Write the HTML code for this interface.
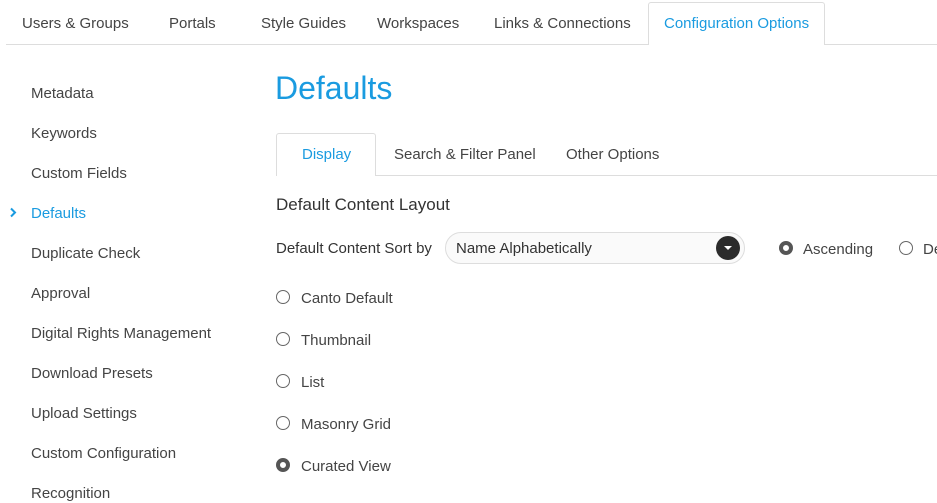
<!DOCTYPE html>
<html><head><style>
*{margin:0;padding:0;box-sizing:border-box}
body{width:937px;height:496px;overflow:hidden;background:#fff;font-family:"Liberation Sans",sans-serif;color:#444;font-size:15px;position:relative}
.a{position:absolute;white-space:nowrap;line-height:18px;margin-top:1px}
.blue{color:#1a9be0}
.r{position:absolute;width:14px;height:14px;border:1.5px solid #666;border-radius:50%;background:#fff}
.r.on{border:4px solid #555}
</style></head><body>
<div style="position:absolute;left:6px;top:44px;width:931px;height:1px;background:#ddd"></div>
<div style="position:absolute;left:648px;top:2px;width:177px;height:43px;border:1px solid #ddd;border-bottom:none;background:#fff;border-radius:3px 3px 0 0"></div>
<div class="a" style="left:22px;top:14px">Users &amp; Groups</div>
<div class="a" style="left:169px;top:14px">Portals</div>
<div class="a" style="left:261px;top:14px">Style Guides</div>
<div class="a" style="left:377px;top:14px">Workspaces</div>
<div class="a" style="left:494px;top:14px">Links &amp; Connections</div>
<div class="a blue" style="left:664px;top:14px">Configuration Options</div>

<div class="a" style="left:31px;top:84px">Metadata</div>
<div class="a" style="left:31px;top:124px">Keywords</div>
<div class="a" style="left:31px;top:164px">Custom Fields</div>
<svg style="position:absolute;left:9px;top:207px" width="8" height="11" viewBox="0 0 8 11"><path d="M2 1.5l4 4-4 4" fill="none" stroke="#1a9be0" stroke-width="2"/></svg>
<div class="a blue" style="left:31px;top:204px">Defaults</div>
<div class="a" style="left:31px;top:244px">Duplicate Check</div>
<div class="a" style="left:31px;top:284px">Approval</div>
<div class="a" style="left:31px;top:324px">Digital Rights Management</div>
<div class="a" style="left:31px;top:364px">Download Presets</div>
<div class="a" style="left:31px;top:404px">Upload Settings</div>
<div class="a" style="left:31px;top:444px">Custom Configuration</div>
<div class="a" style="left:31px;top:484px">Recognition</div>

<div class="a blue" style="left:275px;top:68px;font-size:32px;line-height:38px">Defaults</div>

<div style="position:absolute;left:276px;top:175px;width:661px;height:1px;background:#ddd"></div>
<div style="position:absolute;left:276px;top:133px;width:100px;height:43px;border:1px solid #ddd;border-bottom:none;background:#fff;border-radius:3px 3px 0 0"></div>
<div class="a blue" style="left:302px;top:145px">Display</div>
<div class="a" style="left:394px;top:145px">Search &amp; Filter Panel</div>
<div class="a" style="left:566px;top:145px">Other Options</div>

<div class="a" style="left:276px;top:194px;font-size:17px;line-height:20px;color:#333">Default Content Layout</div>
<div class="a" style="left:276px;top:239px;color:#333">Default Content Sort by</div>
<div style="position:absolute;left:445px;top:232px;width:300px;height:32px;border:1px solid #ddd;border-radius:16px;background:#fafafa"></div>
<div class="a" style="left:456px;top:239px;color:#333">Name Alphabetically</div>
<div style="position:absolute;left:716px;top:236px;width:24px;height:24px;border-radius:50%;background:#2b2b2b"></div>
<div style="position:absolute;left:724px;top:246px;width:0;height:0;border-left:4px solid transparent;border-right:4px solid transparent;border-top:4px solid #fff"></div>
<div class="r on" style="left:779px;top:241px"></div>
<div class="a" style="left:803px;top:240px">Ascending</div>
<div class="r" style="left:899px;top:241px"></div>
<div class="a" style="left:923px;top:240px">De</div>

<div class="r" style="left:276px;top:290px"></div><div class="a" style="left:301px;top:289px">Canto Default</div>
<div class="r" style="left:276px;top:332px"></div><div class="a" style="left:301px;top:331px">Thumbnail</div>
<div class="r" style="left:276px;top:374px"></div><div class="a" style="left:301px;top:373px">List</div>
<div class="r" style="left:276px;top:416px"></div><div class="a" style="left:301px;top:415px">Masonry Grid</div>
<div class="r on" style="left:276px;top:458px"></div><div class="a" style="left:301px;top:457px">Curated View</div>
</body></html>
